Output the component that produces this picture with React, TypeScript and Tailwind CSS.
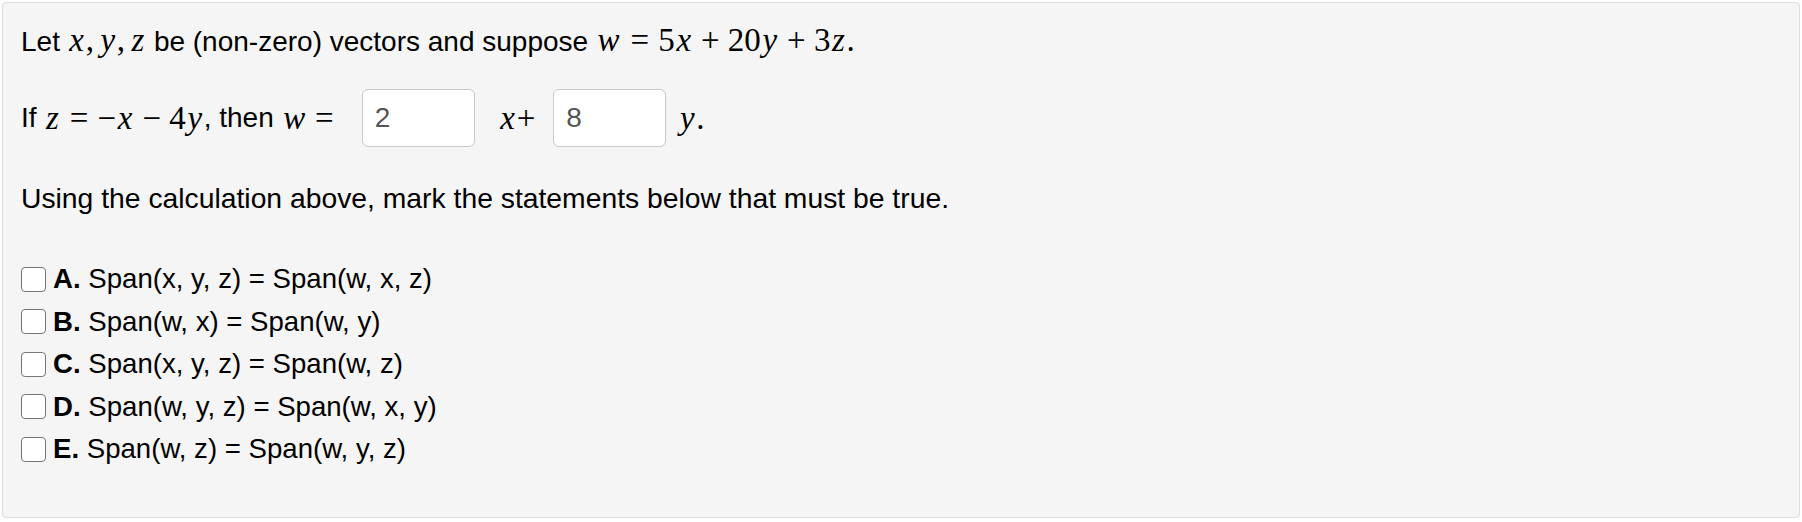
const sans = { fontFamily: '"Liberation Sans", Arial, Helvetica, sans-serif' }

// math italic letter, padded a little since Times italics are narrower than TeX's
function V({ children }: { children: React.ReactNode }) {
  return <span className="italic px-[0.05em]">{children}</span>
}

function M({ children }: { children: React.ReactNode }) {
  return (
    <span className="text-[33px] leading-none" style={{ fontFamily: '"Liberation Serif", "Times New Roman", serif' }}>
      {children}
    </span>
  )
}

function Rel({ c }: { c: string }) {
  return <span className="mx-[0.28em]">{c}</span>
}

function Bin({ c }: { c: string }) {
  return <span className="mx-[0.25em]">{c}</span>
}

function AnswerBox({ value }: { value: string }) {
  return (
    <div className="w-[113px] h-[58px] bg-white border-[1.5px] border-[#c8c8c8] rounded-[6px] flex items-center pl-[12px] text-[28px] text-[#555]">
      {value}
    </div>
  )
}

const options = [
  { key: 'A', text: 'Span(x, y, z) = Span(w, x, z)' },
  { key: 'B', text: 'Span(w, x) = Span(w, y)' },
  { key: 'C', text: 'Span(x, y, z) = Span(w, z)' },
  { key: 'D', text: 'Span(w, y, z) = Span(w, x, y)' },
  { key: 'E', text: 'Span(w, z) = Span(w, y, z)' },
]

export default function App() {
  return (
    <div className="w-[1802px] h-[522px] bg-white p-[2px]" style={sans}>
      <div className="h-[516px] bg-[#f5f5f5] border border-[#dedede] rounded-[4px] pl-[18px] pt-[18px] text-[28px] text-black">
        <p className="leading-[42px] h-[42px]">
          Let{' '}
          <M>
            <V>x</V>,<span className="ml-[0.15em]" /><V>y</V>,<span className="ml-[0.15em]" /><V>z</V>
          </M>{' '}
          be (non-zero) vectors and suppose{' '}
          <M>
            <V>w</V>
            <Rel c="=" />5<V>x</V>
            <Bin c="+" />20<V>y</V>
            <Bin c="+" />3<V>z</V>.
          </M>
        </p>

        <div className="mt-[26px] h-[58px] flex items-center whitespace-pre">
          <span>If </span>
          <M>
            <V>z</V>
            <Rel c="=" />−<V>x</V>
            <Bin c="−" />4<V>y</V>
          </M>
          <span>, then </span>
          <M>
            <V>w</V>
            <span className="ml-[0.25em]">=</span>
          </M>
          <div className="ml-[28px]">
            <AnswerBox value="2" />
          </div>
          <M>
            <span className="ml-[24px]">
              <V>x</V>+
            </span>
          </M>
          <div className="ml-[18px]">
            <AnswerBox value="8" />
          </div>
          <M>
            <span className="ml-[12px]">
              <V>y</V>.
            </span>
          </M>
        </div>

        <p className="mt-[30px] leading-[42px] h-[42px] text-[28.3px]">
          Using the calculation above, mark the statements below that must be true.
        </p>

        <div className="mt-[39px] flex flex-col text-[27.6px]">
          {options.map((o) => (
            <label key={o.key} className="h-[42.5px] flex items-center">
              <span className="w-[25px] h-[25px] bg-white border-[1.5px] border-[#767676] rounded-[4px] shrink-0" />
              <span className="ml-[7px] leading-[42px]">
                <b>{o.key}.</b> {o.text}
              </span>
            </label>
          ))}
        </div>
      </div>
    </div>
  )
}
